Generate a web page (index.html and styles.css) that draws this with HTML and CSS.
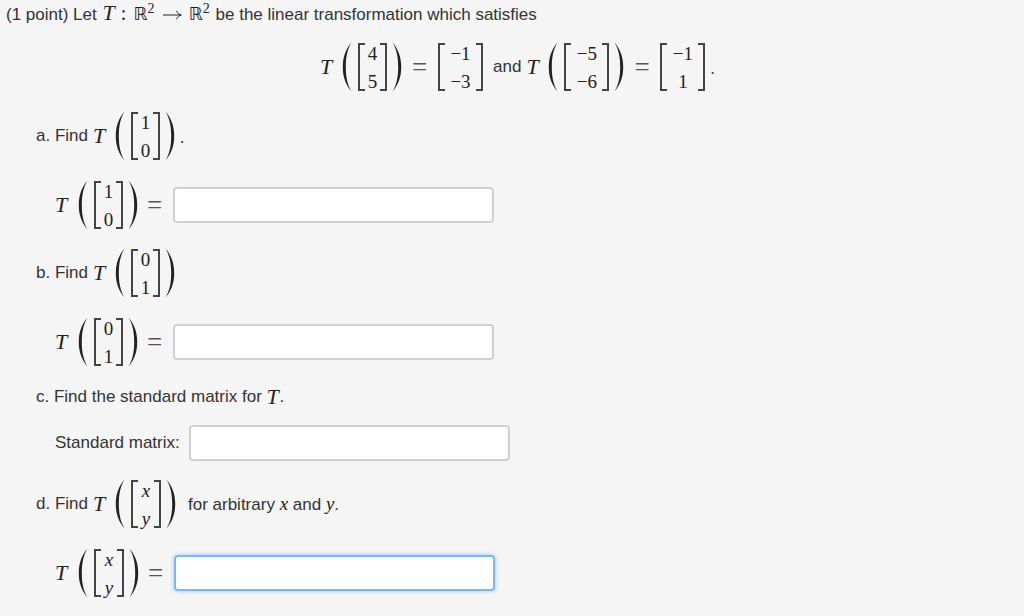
FILE: index.html
```html
<!DOCTYPE html>
<html lang="en">
<head>
    <meta charset="UTF-8">
    <title>Linear transformation problem</title>
    <link rel="stylesheet" href="styles.css">
</head>
<body>
    <svg class="defs" width="0" height="0">
        <symbol id="lp" viewBox="0 0 10 50"><path d="M9.500 .5C3.800 7 .8 15 .8 25s3 18 8.700 24.500C5.500 43 3.800 35 3.800 25S5.500 7 9.500 .5z"/></symbol>
        <symbol id="rp" viewBox="0 0 10 50"><path d="M.5 .5C6.200 7 9.200 15 9.200 25s-3 18-8.700 24.500C4.500 43 6.200 35 6.200 25S4.500 7 .5 .5z"/></symbol>
    </svg>

    <div class="intro">(1 point) Let <i class="var">T</i><span class="mo">:</span><span class="bb">ℝ</span><sup>2</sup><svg class="arrow" viewBox="0 0 19 10"><path d="M0 5h18M13.500 .8c.8 2 2.300 3.400 4.800 4.200-2.500.8-4 2.200-4.800 4.200"/></svg><span class="bb">ℝ</span><sup class="end">2</sup> be the linear transformation which satisfies</div>

    <div class="display">
        <i class="var">T</i>
        <svg class="paren lp"><use href="#lp"/></svg>
        <span class="matrix"><span class="cell">4</span><span class="cell">5</span></span>
        <svg class="paren rp"><use href="#rp"/></svg>
        <span class="eq">=</span>
        <span class="matrix wide"><span class="cell">−1</span><span class="cell">−3</span></span>
        <span class="word">and</span>
        <i class="var">T</i>
        <svg class="paren lp"><use href="#lp"/></svg>
        <span class="matrix wide"><span class="cell">−5</span><span class="cell">−6</span></span>
        <svg class="paren rp"><use href="#rp"/></svg>
        <span class="eq">=</span>
        <span class="matrix wide"><span class="cell">−1</span><span class="cell">1</span></span>
        <span class="dot">.</span>
    </div>

    <div class="row find part-a">
        <span>a. Find</span>
        <i class="var">T</i>
        <svg class="paren lp"><use href="#lp"/></svg>
        <span class="matrix"><span class="cell">1</span><span class="cell">0</span></span>
        <svg class="paren rp"><use href="#rp"/></svg>
        <span class="dot">.</span>
    </div>
    <div class="row answer">
        <i class="var">T</i>
        <svg class="paren lp"><use href="#lp"/></svg>
        <span class="matrix"><span class="cell">1</span><span class="cell">0</span></span>
        <svg class="paren rp"><use href="#rp"/></svg>
        <span class="eq">=</span>
        <input class="field" type="text">
    </div>

    <div class="row find">
        <span>b. Find</span>
        <i class="var">T</i>
        <svg class="paren lp"><use href="#lp"/></svg>
        <span class="matrix"><span class="cell">0</span><span class="cell">1</span></span>
        <svg class="paren rp"><use href="#rp"/></svg>
    </div>
    <div class="row answer">
        <i class="var">T</i>
        <svg class="paren lp"><use href="#lp"/></svg>
        <span class="matrix"><span class="cell">0</span><span class="cell">1</span></span>
        <svg class="paren rp"><use href="#rp"/></svg>
        <span class="eq">=</span>
        <input class="field" type="text">
    </div>

    <div class="row plain">c. Find the standard matrix for&nbsp;<i class="var">T</i>.</div>
    <div class="row standard">
        <span>Standard matrix:</span>
        <input class="field" type="text">
    </div>

    <div class="row find part-d">
        <span>d. Find</span>
        <i class="var">T</i>
        <svg class="paren lp"><use href="#lp"/></svg>
        <span class="matrix tall"><i class="cell">x</i><i class="cell">y</i></span>
        <svg class="paren rp"><use href="#rp"/></svg>
        <span class="tail">for arbitrary <i class="var small">x</i> and <i class="var small">y</i>.</span>
    </div>
    <div class="row answer">
        <i class="var">T</i>
        <svg class="paren lp"><use href="#lp"/></svg>
        <span class="matrix tall"><i class="cell">x</i><i class="cell">y</i></span>
        <svg class="paren rp"><use href="#rp"/></svg>
        <span class="eq">=</span>
        <input class="field focused" type="text">
    </div>
</body>
</html>
```

FILE: styles.css
```css
* {
    box-sizing: border-box;
}

body {
    margin: 0;
    height: 616px;
    overflow: hidden;
    background-color: #f5f5f5;
    color: #333;
    font-family: "Liberation Sans", Arial, sans-serif;
    font-size: 17px;
}

.defs {
    position: absolute;
}

.intro {
    height: 24px;
    padding-left: 6px;
    line-height: 25px;
    white-space: nowrap;
}

.intro sup {
    font-family: "Liberation Serif", serif;
    font-size: 14px;
    line-height: 0;
    color: #222;
}

.intro .end {
    margin-right: 1px;
}

.intro .var {
    display: inline;
    margin-left: 1px;
}

.bb {
    font-family: "DejaVu Sans", sans-serif;
    font-size: 18px;
    color: #222;
}

.arrow {
    width: 19px;
    height: 10px;
    margin: 0 7px 0 8px;
    fill: none;
    stroke: #222;
    stroke-width: 1;
}

.mo {
    font-family: "Liberation Serif", serif;
    font-size: 20px;
    margin: 0 7px 0 6px;
    color: #222;
}

.var {
    display: block;
    flex: none;
    width: 15px;
    font-family: "Liberation Serif", serif;
    font-size: 22px;
    font-style: italic;
    color: #222;
}

.var.small {
    display: inline;
    font-size: 19px;
}

.display {
    display: flex;
    align-items: center;
    height: 50px;
    margin-top: 18px;
    padding-left: 320px;
}

.paren {
    width: 10px;
    height: 50px;
    flex: none;
    fill: #222;
}

.lp {
    margin: 0 6px 0 7px;
}

.rp {
    margin: 0 0 0 5px;
}

.matrix {
    display: flex;
    flex: none;
    flex-direction: column;
    justify-content: center;
    align-items: center;
    width: 29px;
    height: 48px;
    padding-top: 2px;
    border-left: 2px solid #444;
    border-right: 2px solid #444;
    background:
        linear-gradient(#444, #444) 0 0 / 5px 2px no-repeat,
        linear-gradient(#444, #444) 100% 0 / 5px 2px no-repeat,
        linear-gradient(#444, #444) 0 100% / 5px 2px no-repeat,
        linear-gradient(#444, #444) 100% 100% / 5px 2px no-repeat;
    font-family: "Liberation Serif", serif;
    font-size: 19px;
    line-height: 28px;
    color: #222;
}

.matrix.wide {
    width: 45px;
}

.matrix.tall {
    width: 30px;
}

.cell {
    display: block;
    flex: none;
}

.eq {
    flex: none;
    width: 15px;
    margin: 0 11px 0 10px;
    font-family: "Liberation Serif", serif;
    font-size: 27px;
    line-height: 1;
    text-align: center;
    color: #555;
}

.word {
    margin: 0 5px 0 10px;
}

.dot {
    margin: 4px 0 0 5px;
    font-family: "Liberation Serif", serif;
}

.row {
    display: flex;
    align-items: center;
    white-space: nowrap;
}

.find {
    height: 50px;
    margin-top: 16px;
    padding-left: 36px;
}

.find > .var {
    margin-left: 5px;
}

.part-a {
    margin-top: 19px;
}

.tail {
    margin-left: 12px;
}

.answer {
    height: 54px;
    margin-top: 17px;
    padding-left: 55px;
}

.answer > .lp {
    margin-left: 8px;
}

.answer > .eq {
    margin: 0 11px 0 9px;
}

.plain {
    height: 24px;
    margin-top: 16px;
    padding-left: 36px;
}

.plain .var {
    width: 13px;
}

.standard {
    height: 36px;
    margin-top: 16px;
    padding-left: 55px;
    gap: 9px;
}

.find.part-d {
    margin-top: 18px;
}

.field {
    flex: none;
    width: 321px;
    height: 36px;
    padding: 4px 6px;
    background-color: #fff;
    border: 2px solid #d0d0d0;
    border-radius: 4px;
    outline: none;
}

.focused {
    border-color: #7cb8ec;
    box-shadow: 0 0 4px rgba(82, 168, 236, .6);
}
```
